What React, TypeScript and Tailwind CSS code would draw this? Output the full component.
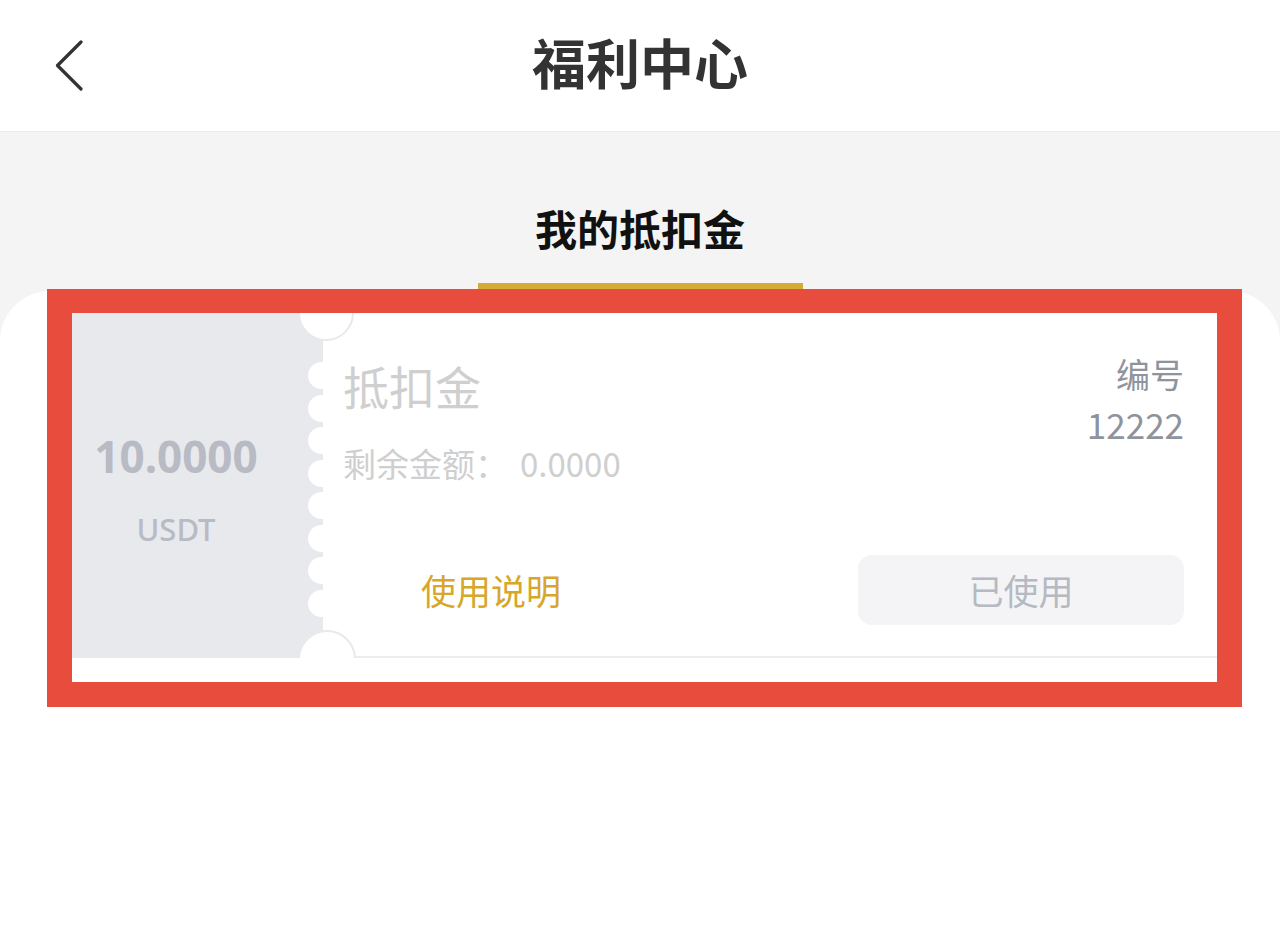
const cjk = { fontFamily: '"Noto Sans CJK SC", "Noto Sans", sans-serif' };
const latin = { fontFamily: '"Noto Sans", "Noto Sans CJK SC", sans-serif' };

// scallop centres along the tear line (relative to card top)
const bumps = [0, 1, 2, 3, 4, 5, 6, 7].map((i) => 50 + i * 32.5);

function BackIcon() {
  return (
    <svg width="30" height="52" viewBox="0 0 30 52" fill="none">
      <path
        d="M26 2 L2.5 25.5 L26 49"
        stroke="#333333"
        strokeWidth="3.2"
        strokeLinecap="round"
        strokeLinejoin="round"
      />
    </svg>
  );
}

function Coupon() {
  return (
    <div className="relative ml-[56px] mr-[40px] flex h-[346px] overflow-hidden">
      {/* left stub */}
      <div className="flex w-[267px] shrink-0 flex-col items-center bg-[#e8e9ed] pr-[27px] pt-[118px]" style={latin}>
        <p className="text-[44px] font-bold leading-[52px] text-[#b8bbc4]">10.0000</p>
        <p className="mt-[27px] text-[31px] font-medium leading-[40px] text-[#b8bbc4]">USDT</p>
      </div>

      {/* body */}
      <div className="flex min-w-0 flex-1 flex-col justify-between border-b-2 border-[#ededed] bg-white pb-[31px] pl-[20px] pr-[56px]" style={cjk}>
        <div className="flex items-start justify-between">
          <div className="mt-[45px]">
            <p className="text-[46px] leading-[56px] text-[#cfcfcf]">抵扣金</p>
            <p className="mt-[28px] text-[33px] leading-[44px] text-[#cfcfcf]">
              剩余金额：<span className="ml-[12px]">0.0000</span>
            </p>
          </div>
          <div className="mt-[37px] text-right text-[34px] leading-[50px] text-[#8f939c]">
            <p>编号</p>
            <p className="text-[35px]">12222</p>
          </div>
        </div>
        <div className="flex items-center justify-between">
          <span className="ml-[78px] text-[35px] leading-[44px] text-[#d6a72a]">使用说明</span>
          <button
            type="button"
            className="flex h-[70px] w-[326px] items-center justify-center rounded-[14px] bg-[#f4f4f6] text-[35px] text-[#b5b9c1]"
          >
            已使用
          </button>
        </div>
      </div>

      {/* tear line */}
      {bumps.map((y) => (
        <span
          key={y}
          className="absolute left-[252px] h-[27px] w-[27px] rounded-full bg-white"
          style={{ top: y }}
        />
      ))}
      <span className="absolute left-[242px] top-[-27px] h-[56px] w-[56px] rounded-full border-2 border-[#e9e9e9] bg-white" />
      <span className="absolute bottom-[-30px] left-[242px] h-[58px] w-[58px] rounded-full border-2 border-[#e9e9e9] bg-white" />
    </div>
  );
}

export default function App() {
  return (
    <div className="relative flex h-[930px] w-full flex-col overflow-hidden bg-[#f4f4f4]" style={cjk}>
      <header className="grid h-[132px] shrink-0 grid-cols-[1fr_auto_1fr] items-center border-b border-[#ebebeb] bg-white">
        <div className="pl-[55px]">
          <BackIcon />
        </div>
        <h1 className="pb-[9px] text-[54px] font-bold text-[#333333]">福利中心</h1>
        <div />
      </header>

      <div className="flex shrink-0 flex-col items-center pt-[71px]">
        <p className="text-[42px] font-bold leading-[50px] text-[#111111]">我的抵扣金</p>
        <div className="mt-[30px] h-[8px] w-[325px] bg-[#d5ab38]" />
      </div>

      <main className="flex-1 rounded-t-[50px] bg-white pt-[21px]">
        <Coupon />
      </main>

      {/* red highlight frame */}
      <div className="pointer-events-none absolute left-[47px] top-[289px] h-[418px] w-[1195px] border-[25px] border-t-[24px] border-[#e84c3d]" />
    </div>
  );
}
